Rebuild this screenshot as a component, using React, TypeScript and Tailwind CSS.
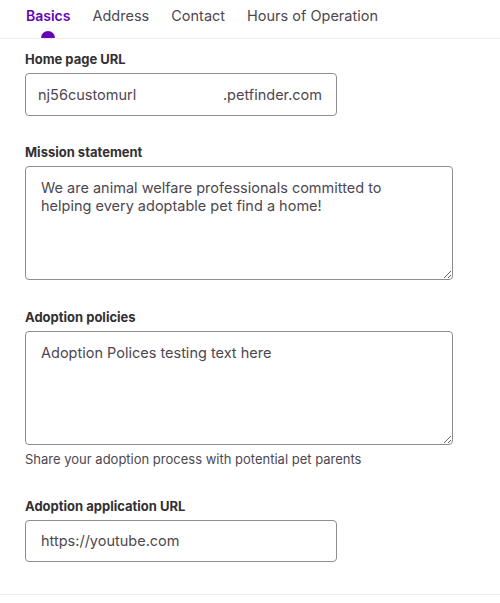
import React from 'react';

const tabs = ['Basics', 'Address', 'Contact', 'Hours of Operation'];

const Label: React.FC<{ children: React.ReactNode }> = ({ children }) => (
  <label className="block text-[13px] leading-5 font-bold text-[#333033] mb-[4px]">{children}</label>
);

export default function App() {
  return (
    <div
      className="w-[500px] h-[603px] bg-white overflow-hidden text-[#4d4751]"
      style={{ fontFamily: 'Inter, "Noto Sans", sans-serif' }}
    >
      {/* Tabs */}
      <div className="flex h-[39px] border-b border-[#ececec] px-[26px] gap-[22px]">
        {tabs.map((t, i) => (
          <div key={t} className="relative pt-[3px]">
            <span
              className={
                i === 0
                  ? 'text-[14px] leading-5 font-semibold text-[#6504b5]'
                  : 'text-[14.5px] leading-5 text-[#4d4751]'
              }
            >
              {t}
            </span>
            {i === 0 && (
              <span className="absolute left-1/2 -translate-x-1/2 bottom-0 w-[14px] h-[7px] rounded-t-full bg-[#6504b5]" />
            )}
          </div>
        ))}
      </div>

      <div className="px-[25px] pt-[10px]">
        {/* Home page URL */}
        <Label>Home page URL</Label>
        <div className="flex items-center w-[312px] h-[43px] border border-[#8f8c91] rounded-[4px] text-[14.5px]">
          <span className="ml-[12px] flex-1">nj56customurl</span>
          <span className="mr-[14px]">.petfinder.com</span>
        </div>

        {/* Mission statement */}
        <div className="mt-[26px]">
          <Label>Mission statement</Label>
          <textarea
            readOnly
            defaultValue="We are animal welfare professionals committed to helping every adoptable pet find a home!"
            className="block w-[428px] h-[114px] border border-[#8f8c91] rounded-[4px] pl-[15px] pr-[50px] pt-[12px] text-[14.5px] leading-[18px] text-[#4d4751] outline-none resize-y"
          />
        </div>

        {/* Adoption policies */}
        <div className="mt-[27px]">
          <Label>Adoption policies</Label>
          <textarea
            readOnly
            defaultValue="Adoption Polices testing text here"
            className="block w-[428px] h-[114px] border border-[#8f8c91] rounded-[4px] pl-[15px] pr-[50px] pt-[12px] text-[14.5px] leading-[18px] text-[#4d4751] outline-none resize-y"
          />
          <p className="mt-[4px] text-[13px] leading-5 text-[#4d4751]">Share your adoption process with potential pet parents</p>
        </div>

        {/* Adoption application URL */}
        <div className="mt-[27px]">
          <Label>Adoption application URL</Label>
          <div className="flex items-center w-[312px] h-[42px] border border-[#8f8c91] rounded-[4px] px-[15px] text-[14.5px]">
            https://youtube.com
          </div>
        </div>
      </div>

      <div className="mt-[32px] border-t border-[#ececec]" />
    </div>
  );
}
